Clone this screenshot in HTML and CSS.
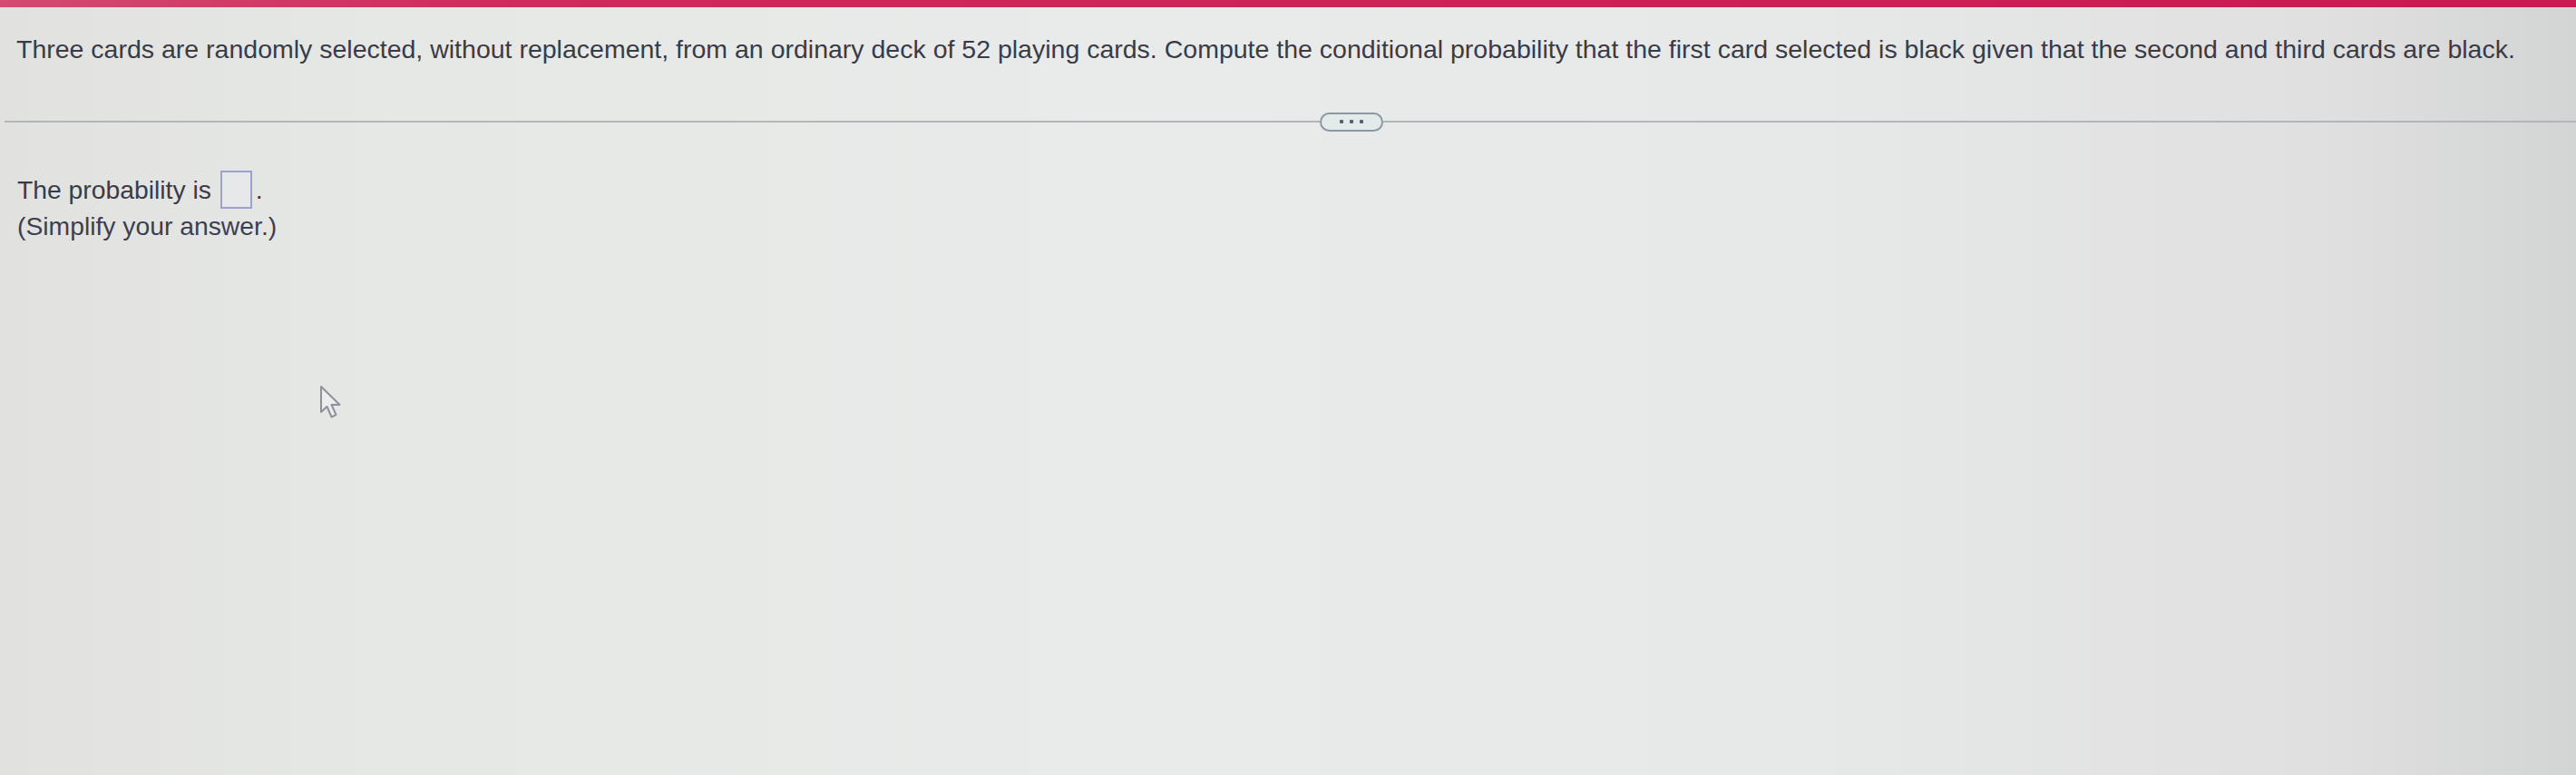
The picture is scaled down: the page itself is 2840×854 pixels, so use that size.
FILE: index.html
```html
<!DOCTYPE html>
<html lang="en">
<head>
<meta charset="utf-8">
<title>Conditional probability</title>
<link rel="stylesheet" href="styles.css">
</head>
<body>
<div class="page">
  <div class="topbar"></div>
  <div class="question">Three cards are randomly selected, without replacement, from an ordinary deck of 52 playing cards. Compute the conditional probability that the first card selected is black given that the second and third cards are black.</div>
  <div class="divider">
    <span class="rule rule-left"></span>
    <button class="more" type="button"><span class="dot"></span><span class="dot"></span><span class="dot"></span></button>
    <span class="rule"></span>
  </div>
  <div class="answer">
    <div class="line">The probability is <span class="box"></span><span class="period">.</span></div>
    <div class="line hint">(Simplify your answer.)</div>
  </div>
  <svg class="cursor" width="28" height="40" viewBox="0 0 28 40">
    <path d="M2 2 L2 30 L8.5 24 L13.5 35.5 L18.5 33.2 L13.5 22 L22.5 22 Z" fill="#eceeed" stroke="#8e909c" stroke-width="2" stroke-linejoin="round"/>
  </svg>
</div>
</body>
</html>
```
FILE: styles.css
```css
html, body {
  margin: 0;
  padding: 0;
}
body {
  width: 2840px;
  height: 854px;
  overflow: hidden;
  font-family: "Liberation Sans", Arial, sans-serif;
  color: #3b3b47;
}
.page {
  position: relative;
  width: 2840px;
  height: 854px;
  background: linear-gradient(90deg, #e1e2e0 0%, #e6e8e6 15%, #e9ebea 45%, #e7e9e8 70%, #dfe0df 90%, #d3d4d4 100%);
  display: flex;
  flex-direction: column;
}
.topbar {
  height: 8px;
  background: linear-gradient(90deg, #d24b70 0%, #cf2a5c 20%, #c91a52 100%);
  flex: none;
}
.question {
  font-size: 28.5px;
  line-height: 32px;
  padding: 30px 0 0 18px;
  white-space: nowrap;
}
.divider {
  display: flex;
  align-items: center;
  margin: 53px 0 0 5px;
  height: 22px;
}
.rule {
  flex: 1;
  height: 2px;
  background: #b3b6b9;
}
.rule-left {
  flex: none;
  width: 1450px;
}
.more {
  width: 70px;
  height: 21px;
  padding: 0;
  margin: 0;
  border: 2px solid #8b98a2;
  border-radius: 11px;
  background: #e2eaea;
  display: flex;
  align-items: center;
  justify-content: center;
  gap: 7px;
  box-sizing: border-box;
  flex: none;
}
.dot {
  width: 4px;
  height: 4px;
  background: #556270;
  border-radius: 1px;
}
.answer {
  padding: 44px 0 0 19px;
  font-size: 28.3px;
}
.line {
  line-height: 40px;
  height: 40px;
  display: flex;
  align-items: baseline;
  white-space: pre;
}
.box {
  display: inline-block;
  width: 35px;
  height: 42px;
  box-sizing: border-box;
  border: 2px solid #9da1d0;
  margin-left: 2px;
  align-self: center;
  background: #e6e8ea;
}
.period {
  margin-left: 4px;
}
.hint {
  color: #3e3e52;
}
.cursor {
  position: absolute;
  left: 352px;
  top: 424px;
}
```
